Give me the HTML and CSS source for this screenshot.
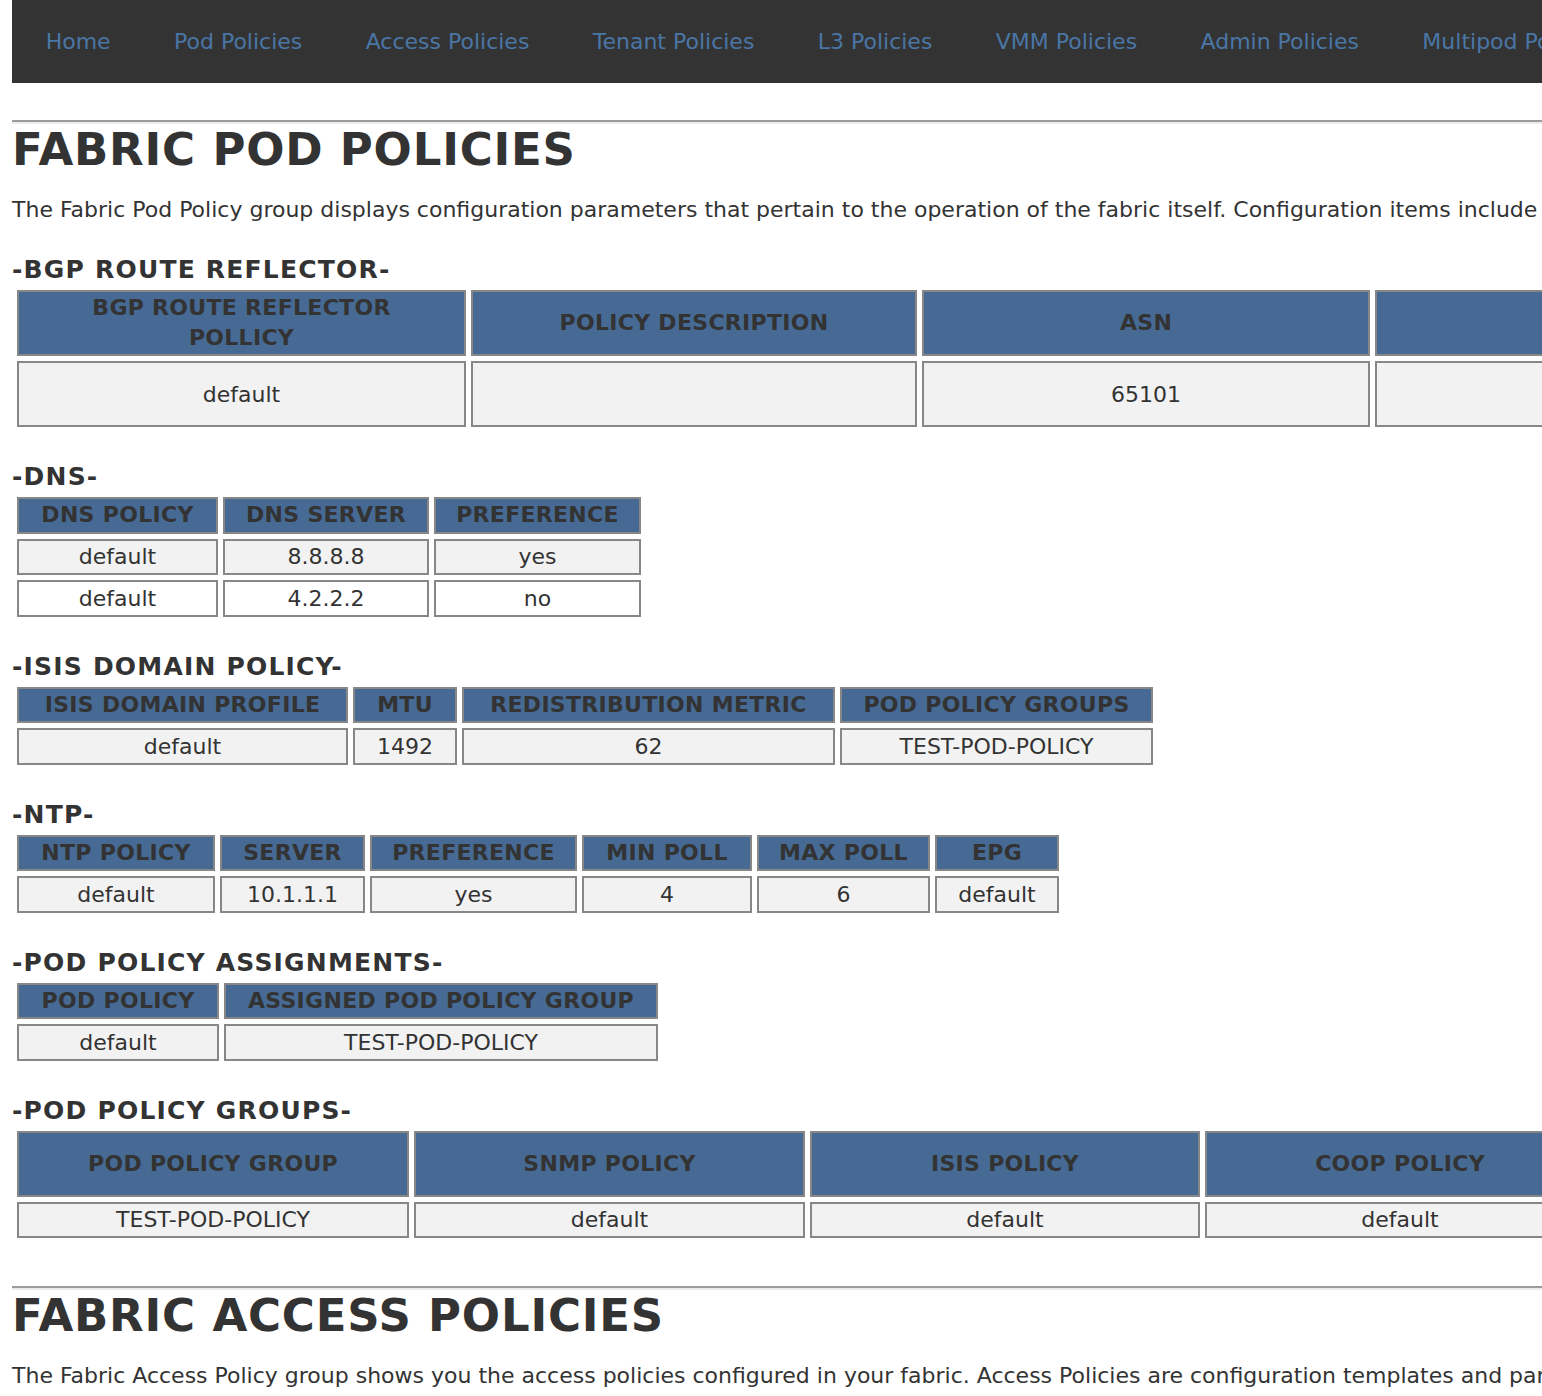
FILE: index.html
```html
<!DOCTYPE html>
<html lang="en">
<head>
<meta charset="utf-8">
<title>ACI Fabric Policies</title>
<link rel="stylesheet" href="styles.css">
</head>
<body>
<nav class="topnav">
  <a class="topnav-link" href="#home">Home</a>
  <a class="topnav-link" href="#pod">Pod Policies</a>
  <a class="topnav-link" href="#access">Access Policies</a>
  <a class="topnav-link" href="#tenant">Tenant Policies</a>
  <a class="topnav-link" href="#l3">L3 Policies</a>
  <a class="topnav-link" href="#vmm">VMM Policies</a>
  <a class="topnav-link" href="#admin">Admin Policies</a>
  <a class="topnav-link" href="#multipod">Multipod Policies</a>
</nav>

<main class="page">
  <section class="group" id="pod">
    <hr class="divider">
    <h1 class="group-title">FABRIC POD POLICIES</h1>
    <p class="group-intro">The Fabric Pod Policy group displays configuration parameters that pertain to the operation of the fabric itself. Configuration items include BGP route reflectors, DNS, ISIS, NTP and pod policy groups.</p>

    <h3 class="sub-title">-BGP ROUTE REFLECTOR-</h3>
    <table class="grid t-bgp">
      <tr class="row-tall"><th>BGP ROUTE REFLECTOR<br>POLLICY</th><th>POLICY DESCRIPTION</th><th>ASN</th><th>NODE ID</th></tr>
      <tr class="row-tall"><td>default</td><td></td><td>65101</td><td>201</td></tr>
    </table>

    <h3 class="sub-title">-DNS-</h3>
    <table class="grid t-dns">
      <tr><th>DNS POLICY</th><th>DNS SERVER</th><th>PREFERENCE</th></tr>
      <tr><td>default</td><td>8.8.8.8</td><td>yes</td></tr>
      <tr><td>default</td><td>4.2.2.2</td><td>no</td></tr>
    </table>

    <h3 class="sub-title">-ISIS DOMAIN POLICY-</h3>
    <table class="grid t-isis">
      <tr><th>ISIS DOMAIN PROFILE</th><th>MTU</th><th>REDISTRIBUTION METRIC</th><th>POD POLICY GROUPS</th></tr>
      <tr><td>default</td><td>1492</td><td>62</td><td>TEST-POD-POLICY</td></tr>
    </table>

    <h3 class="sub-title">-NTP-</h3>
    <table class="grid t-ntp">
      <tr><th>NTP POLICY</th><th>SERVER</th><th>PREFERENCE</th><th>MIN POLL</th><th>MAX POLL</th><th>EPG</th></tr>
      <tr><td>default</td><td>10.1.1.1</td><td>yes</td><td>4</td><td>6</td><td>default</td></tr>
    </table>

    <h3 class="sub-title">-POD POLICY ASSIGNMENTS-</h3>
    <table class="grid t-ppa">
      <tr><th>POD POLICY</th><th>ASSIGNED POD POLICY GROUP</th></tr>
      <tr><td>default</td><td>TEST-POD-POLICY</td></tr>
    </table>

    <h3 class="sub-title">-POD POLICY GROUPS-</h3>
    <table class="grid t-ppg">
      <tr class="row-tall"><th>POD POLICY GROUP</th><th>SNMP POLICY</th><th>ISIS POLICY</th><th>COOP POLICY</th><th>BGP ROUTE REFLECTOR<br>POLICY</th></tr>
      <tr><td>TEST-POD-POLICY</td><td>default</td><td>default</td><td>default</td><td>default</td></tr>
    </table>
  </section>

  <section class="group" id="access">
    <hr class="divider">
    <h1 class="group-title">FABRIC ACCESS POLICIES</h1>
    <p class="group-intro">The Fabric Access Policy group shows you the access policies configured in your fabric. Access Policies are configuration templates and parameters that govern how leaf access ports connect to external devices.</p>
  </section>
</main>
</body>
</html>
```

FILE: styles.css
```css
html, body {
  overflow: hidden;
}

body {
  margin: 0;
  padding: 0 0 0 12px;
  background: #ffffff;
  color: #333333;
  font-family: "DejaVu Sans", Verdana, sans-serif;
  font-size: 22px;
}

.topnav {
  display: flex;
  align-items: center;
  height: 83px;
  width: 2600px;
  padding-left: 2px;
  background: #333333;
}

.topnav-link {
  padding: 0 31.7px;
  color: #4a76a6;
  text-decoration: none;
  font-size: 22px;
  white-space: nowrap;
}

.page {
  width: 2600px;
}

.group {
  padding-top: 37px;
}

.group + .group {
  padding-top: 43px;
}

.divider {
  margin: 0;
  height: 0;
  border: 0;
  border-top: 2px solid #9b9b9b;
  border-bottom: 2px solid #ececec;
}

.group-title {
  margin: 0;
  font-size: 45px;
  line-height: 52px;
  letter-spacing: 0.8px;
  font-weight: bold;
}

.group-intro {
  margin: 19px 0 0;
  line-height: 30px;
}

.sub-title {
  margin: 30px 0 0;
  font-size: 25px;
  line-height: 30px;
  letter-spacing: 1.2px;
  font-weight: bold;
}

.grid {
  border-collapse: separate;
  border-spacing: 5px;
  table-layout: fixed;
}

.grid tr {
  height: 36.5px;
}

.grid .row-tall {
  height: 66px;
}

.grid th,
.grid td {
  box-sizing: border-box;
  border: 2px solid #878787;
  padding: 0 8px;
  line-height: 30px;
  text-align: center;
  vertical-align: middle;
  white-space: nowrap;
  font-size: 22px;
}

.grid td {
  padding-top: 1px;
}

.grid th {
  background: #466a93;
  color: #333333;
  font-weight: bold;
  letter-spacing: 0.3px;
}

.grid tr:nth-child(even) td {
  background: #f2f2f2;
}

.grid tr:nth-child(odd) td {
  background: #ffffff;
}

.t-bgp th:nth-child(1) { width: 449px; }
.t-bgp th:nth-child(2) { width: 446px; }
.t-bgp th:nth-child(3) { width: 448px; }
.t-bgp th:nth-child(4) { width: 448px; }

.t-dns th:nth-child(1) { width: 201px; }
.t-dns th:nth-child(2) { width: 206px; }
.t-dns th:nth-child(3) { width: 207px; }

.t-isis th:nth-child(1) { width: 331px; }
.t-isis th:nth-child(2) { width: 104px; }
.t-isis th:nth-child(3) { width: 373px; }
.t-isis th:nth-child(4) { width: 313px; }

.t-ntp th:nth-child(1) { width: 198px; }
.t-ntp th:nth-child(2) { width: 145px; }
.t-ntp th:nth-child(3) { width: 207px; }
.t-ntp th:nth-child(4) { width: 170px; }
.t-ntp th:nth-child(5) { width: 173px; }
.t-ntp th:nth-child(6) { width: 124px; }

.t-ppa th:nth-child(1) { width: 202px; }
.t-ppa th:nth-child(2) { width: 434px; }

.t-ppg th:nth-child(1) { width: 392px; }
.t-ppg th:nth-child(2) { width: 391px; }
.t-ppg th:nth-child(3) { width: 390px; }
.t-ppg th:nth-child(4) { width: 390px; }
.t-ppg th:nth-child(5) { width: 390px; }
```
